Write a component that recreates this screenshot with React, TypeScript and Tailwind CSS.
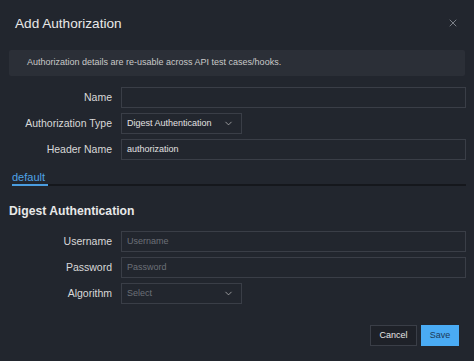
import { ChevronDown, X } from 'lucide-react';

function Row({ label, children }: { label: string; children: React.ReactNode }) {
  return (
    <div className="flex items-center h-[21px]">
      <label className="w-[103px] shrink-0 text-right text-[10.5px] text-[#d9d9d9]">{label}</label>
      <div className="ml-[9px] flex-1 h-full">{children}</div>
    </div>
  );
}

function Field({ value, placeholder }: { value?: string; placeholder?: string }) {
  return (
    <div className="h-full w-full border border-[#3a3e47] bg-[#22262e] px-[5px] flex items-center text-[9px]">
      {value ? (
        <span className="text-[#e2e2e2]">{value}</span>
      ) : (
        <span className="text-[#6c7078]">{placeholder}</span>
      )}
    </div>
  );
}

function Select({ value, placeholder }: { value?: string; placeholder?: string }) {
  return (
    <div className="h-full w-[121px] border border-[#3a3e47] bg-[#22262e] pl-[5px] pr-[7px] flex items-center justify-between text-[9px]">
      {value ? (
        <span className="text-[#e2e2e2]">{value}</span>
      ) : (
        <span className="text-[#6c7078]">{placeholder}</span>
      )}
      <ChevronDown className="w-[11px] h-[11px] text-[#c9c9c9]" strokeWidth={1.5} />
    </div>
  );
}

export default function App() {
  return (
    <div
      className="w-[474px] h-[361px] bg-[#22262e] overflow-hidden flex flex-col"
      style={{ fontFamily: '"Liberation Sans", Arial, sans-serif' }}
    >
      {/* Header */}
      <div className="flex items-center justify-between pl-[15px] pr-[15px] pt-[16px] h-[32px]">
        <h1 className="text-[13.6px] leading-[16px] text-[#e9e9e9]">Add Authorization</h1>
        <X className="w-[12px] h-[12px] text-[#9a9da5] -mt-[3px]" strokeWidth={1.5} />
      </div>

      {/* Info */}
      <div className="mx-[9px] mt-[18px] h-[26px] bg-[#2b2f37] rounded-[2px] flex items-center pl-[18px] text-[9px] text-[#c9c9c9]">
        Authorization details are re-usable across API test cases/hooks.
      </div>

      <div className="pl-[9px] pr-[8px] mt-[11px] flex flex-col gap-[5px]">
        <Row label="Name">
          <Field />
        </Row>
        <Row label="Authorization Type">
          <Select value="Digest Authentication" />
        </Row>
        <Row label="Header Name">
          <Field value="authorization" />
        </Row>
      </div>

      {/* Tabs */}
      <div className="ml-[12px] mr-[8px] mt-[10px] flex items-end">
        <div className="border-b-2 border-[#4a9de0] pr-[3px] text-[11px] leading-[14px] text-[#4fa3e6]">default</div>
        <div className="flex-1 border-b-2 border-[#15171c]" />
      </div>

      <h2 className="ml-[9px] mt-[18px] text-[12.2px] leading-[14px] font-bold text-[#e8e8e8]">Digest Authentication</h2>

      <div className="pl-[9px] pr-[8px] mt-[13px] flex flex-col gap-[5px]">
        <Row label="Username">
          <Field placeholder="Username" />
        </Row>
        <Row label="Password">
          <Field placeholder="Password" />
        </Row>
        <Row label="Algorithm">
          <Select placeholder="Select" />
        </Row>
      </div>

      {/* Footer */}
      <div className="mt-[21px] pr-[15px] flex justify-end gap-[4px]">
        <button className="h-[21px] w-[47px] border border-[#3a3e47] bg-[#1e2128] text-[9px] text-[#e6e6e6]">Cancel</button>
        <button className="h-[21px] w-[38px] bg-[#4aabf4] text-[9px] text-[#1b3a58]">Save</button>
      </div>
    </div>
  );
}
